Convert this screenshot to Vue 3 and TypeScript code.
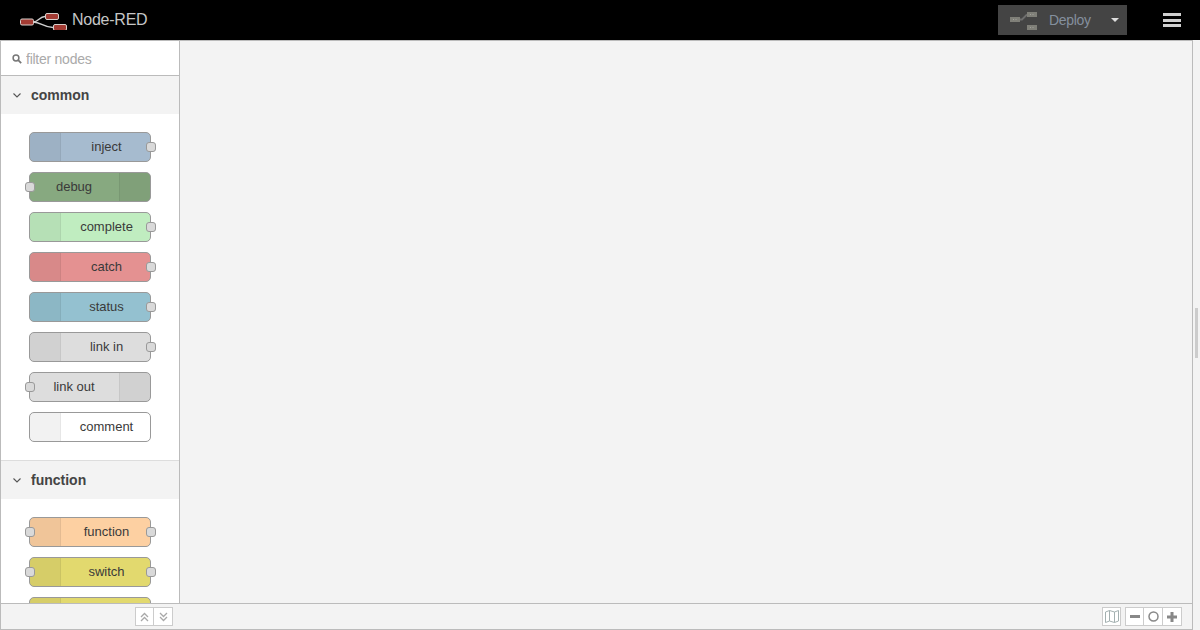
<script setup lang="ts">
interface PaletteNode {
  label: string
  color: string
  inPort: boolean
  outPort: boolean
  iconRight?: boolean
}
interface Category {
  name: string
  nodes: PaletteNode[]
}
const categories: Category[] = [
  {
    name: 'common',
    nodes: [
      { label: 'inject', color: '#a6bbcf', inPort: false, outPort: true },
      { label: 'debug', color: '#87a980', inPort: true, outPort: false, iconRight: true },
      { label: 'complete', color: '#c0edc0', inPort: false, outPort: true },
      { label: 'catch', color: '#e49191', inPort: false, outPort: true },
      { label: 'status', color: '#94c1d0', inPort: false, outPort: true },
      { label: 'link in', color: '#dddddd', inPort: false, outPort: true },
      { label: 'link out', color: '#dddddd', inPort: true, outPort: false, iconRight: true },
      { label: 'comment', color: '#ffffff', inPort: false, outPort: false },
    ],
  },
  {
    name: 'function',
    nodes: [
      { label: 'function', color: '#fdd0a2', inPort: true, outPort: true },
      { label: 'switch', color: '#e2d96e', inPort: true, outPort: true },
      { label: '', color: '#e2d96e', inPort: true, outPort: true },
    ],
  },
]
</script>

<template>
  <div class="app">
    <header class="topbar">
      <div class="brand">
        <svg class="logo" width="48" height="20" viewBox="0 0 48 20">
          <path d="M13 12 C19 12 19 6.5 25 6.5 M13 12 C21 12 24 17.5 33 17.5" fill="none" stroke="#cfcfcf" stroke-width="1.4" />
          <rect x="0.5" y="9" width="13" height="6" rx="1.5" fill="#a33b33" stroke="#d8d0cc" />
          <rect x="25.5" y="3.5" width="13" height="6" rx="1.5" fill="#a33b33" stroke="#d8d0cc" />
          <rect x="33.5" y="14.5" width="13" height="6" rx="1.5" fill="#a33b33" stroke="#d8d0cc" />
        </svg>
        <span class="brand-name">Node-RED</span>
      </div>
      <div class="top-actions">
        <div class="deploy">
          <svg class="deploy-icon" width="27" height="20" viewBox="0 0 27 20">
            <path d="M10 9.5 H12 L17 4.5" fill="none" stroke="#6e6e6e" stroke-width="1.8" />
            <rect x="0" y="7" width="10" height="5" fill="#7f7f78" />
            <rect x="17" y="2" width="10" height="5" fill="#7f7f78" />
            <rect x="17" y="15" width="10" height="5" fill="#7f7f78" />
            <path d="M3 9.5 H7.5 M20 4.5 H24.5 M20 17.5 H24.5" stroke="#a3a39c" stroke-width="1" stroke-dasharray="1 1.5" />
          </svg>
          <span class="deploy-label">Deploy</span>
          <span class="caret"></span>
        </div>
        <div class="burger"><i></i><i></i><i></i></div>
      </div>
    </header>

    <main class="body">
      <aside class="palette">
        <div class="filter">
          <svg class="search" width="10" height="10" viewBox="0 0 10 10">
            <circle cx="4" cy="4" r="2.9" fill="none" stroke="#777" stroke-width="1.5" />
            <path d="M6.2 6.2 L9.2 9.2" stroke="#777" stroke-width="1.8" />
          </svg>
          <input class="filter-input" type="text" placeholder="filter nodes" />
        </div>
        <div class="categories">
          <section v-for="cat in categories" :key="cat.name" class="category">
            <div class="cat-head">
              <svg class="chev" width="8" height="5" viewBox="0 0 8 5">
                <path d="M0.5 0.5 L4 4 L7.5 0.5" fill="none" stroke="#555" stroke-width="1.1" />
              </svg>
              <span>{{ cat.name }}</span>
            </div>
            <div class="cat-nodes">
              <div
                v-for="(n, i) in cat.nodes"
                :key="i"
                class="node"
                :class="{ 'icon-right': n.iconRight }"
                :style="{ backgroundColor: n.color }"
              >
                <span class="node-icon"></span>
                <span class="node-label">{{ n.label }}</span>
                <span v-if="n.inPort" class="port port-in"></span>
                <span v-if="n.outPort" class="port port-out"></span>
              </div>
            </div>
          </section>
        </div>
        <footer class="bar palette-bar">
          <div class="btn-group">
            <button class="tool-btn">
              <svg width="9" height="10" viewBox="0 0 9 10"><path d="M1 5 L4.5 1.5 L8 5 M1 9 L4.5 5.5 L8 9" fill="none" stroke="#a8a8a8" stroke-width="1.3" /></svg>
            </button>
            <button class="tool-btn wide">
              <svg width="9" height="10" viewBox="0 0 9 10"><path d="M1 1 L4.5 4.5 L8 1 M1 5 L4.5 8.5 L8 5" fill="none" stroke="#a8a8a8" stroke-width="1.3" /></svg>
            </button>
          </div>
        </footer>
      </aside>

      <section class="workspace">
        <div class="canvas"></div>
        <footer class="bar work-bar">
          <button class="tool-btn map">
            <svg width="14" height="13" viewBox="0 0 14 13">
              <path d="M0.5 2 L4.5 0.5 L9.5 2 L13.5 0.5 V11 L9.5 12.5 L4.5 11 L0.5 12.5 Z M4.5 0.5 V11 M9.5 2 V12.5" fill="none" stroke="#a3b0b0" stroke-width="1" />
            </svg>
          </button>
          <div class="btn-group zoom">
            <button class="tool-btn">
              <svg width="10" height="11" viewBox="0 0 10 11"><rect x="0" y="4" width="10" height="3" fill="#888" /></svg>
            </button>
            <button class="tool-btn wide">
              <svg width="11" height="11" viewBox="0 0 11 11"><circle cx="5.5" cy="5.5" r="4.5" fill="none" stroke="#888" stroke-width="1.5" /></svg>
            </button>
            <button class="tool-btn wide">
              <svg width="10" height="10" viewBox="0 0 10 10"><path d="M0 3.5 H3.5 V0 H6.5 V3.5 H10 V6.5 H6.5 V10 H3.5 V6.5 H0 Z" fill="#888" /></svg>
            </button>
          </div>
        </footer>
      </section>

      <div class="gutter"><span class="handle"></span></div>
    </main>
  </div>
</template>

<style>
html, body { margin: 0; padding: 0; }
</style>

<style scoped>
.app {
  width: 1200px;
  height: 630px;
  display: flex;
  flex-direction: column;
  overflow: hidden;
  font-family: "Liberation Sans", Arial, sans-serif;
  color: #333;
  background: #f3f3f3;
}
.topbar {
  height: 40px;
  flex: none;
  background: #000;
  display: flex;
  align-items: center;
  justify-content: space-between;
  box-sizing: border-box;
}
.brand { display: flex; align-items: center; margin-left: 20px; }
.logo { display: block; margin-right: 4px; }
.brand-name { font-size: 16px; color: #c6c6c6; letter-spacing: -0.25px; }
.top-actions { display: flex; align-items: center; }
.deploy {
  width: 129px;
  height: 30px;
  box-sizing: border-box;
  background: #444;
  display: flex;
  align-items: center;
  padding-left: 12px;
}
.deploy-icon { display: block; }
.deploy-label { font-size: 14px; color: #84909e; margin-left: 12px; letter-spacing: -0.3px; }
.caret {
  width: 0;
  height: 0;
  margin-left: 20px;
  border-left: 4.5px solid transparent;
  border-right: 4.5px solid transparent;
  border-top: 4.5px solid #ddd;
}
.burger {
  width: 18px;
  margin: 0 19px 0 36px;
  display: flex;
  flex-direction: column;
  gap: 2.5px;
}
.burger i { display: block; height: 3px; background: #d0d0d0; }
.body { flex: 1; min-height: 0; display: flex; }
.palette {
  width: 180px;
  flex: none;
  box-sizing: border-box;
  border-left: 1px solid #bbb;
  border-right: 1px solid #bbb;
  border-top: 1px solid #bbb;
  display: flex;
  flex-direction: column;
  background: #fff;
}
.filter {
  height: 35px;
  flex: none;
  box-sizing: border-box;
  border-bottom: 1px solid #bbb;
  display: flex;
  align-items: center;
  padding: 2px 0 0 11px;
}
.search { display: block; margin-right: 4px; }
.filter-input {
  border: none;
  outline: none;
  padding: 0;
  width: 140px;
  font: 14px "Liberation Sans", Arial, sans-serif;
  letter-spacing: -0.25px;
  color: #333;
  background: transparent;
}
.filter-input::placeholder { color: #aaa; opacity: 1; }
.categories { flex: 1; min-height: 0; overflow: hidden; }
.category + .category { border-top: 1px solid #ddd; }
.cat-head {
  height: 38px;
  background: #f3f3f3;
  display: flex;
  align-items: center;
  font-size: 14px;
  font-weight: bold;
  color: #444;
  padding-left: 12px;
}
.chev { display: block; margin-right: 10px; }
.cat-nodes {
  padding: 18px 0 18px 28px;
  display: flex;
  flex-direction: column;
  gap: 10px;
}
.node {
  position: relative;
  width: 122px;
  height: 30px;
  box-sizing: border-box;
  border: 1px solid #999;
  border-radius: 5px;
  display: flex;
  align-items: center;
  font-size: 13px;
  color: #3a3a3a;
}
.node.icon-right { flex-direction: row-reverse; }
.node-icon {
  width: 31px;
  height: 100%;
  flex: none;
  box-sizing: border-box;
  background: rgba(0, 0, 0, 0.05);
  border-right: 1px solid rgba(0, 0, 0, 0.05);
  border-radius: 4px 0 0 4px;
}
.node.icon-right .node-icon {
  border-right: none;
  border-left: 1px solid rgba(0, 0, 0, 0.05);
  border-radius: 0 4px 4px 0;
}
.node-label {
  flex: 1;
  text-align: center;
  white-space: nowrap;
  padding: 0 0 2px 2px;
}
.node.icon-right .node-label { padding: 0 1px 2px 0; }
.port {
  position: absolute;
  top: 9px;
  width: 10px;
  height: 10px;
  box-sizing: border-box;
  background: #d9d9d9;
  border: 1px solid #999;
  border-radius: 3px;
}
.port-in { left: -5px; }
.port-out { right: -6px; }
.bar {
  height: 27px;
  flex: none;
  box-sizing: border-box;
  background: #f3f3f3;
  border-top: 1px solid #bbb;
  border-bottom: 1px solid #bbb;
  display: flex;
  align-items: center;
  justify-content: flex-end;
}
.palette-bar { margin: 0 -1px 0 0; padding-right: 7px; }
.btn-group { display: flex; }
.tool-btn {
  width: 19px;
  height: 19px;
  padding: 0;
  box-sizing: border-box;
  background: #fff;
  border: 1px solid #ccc;
  display: flex;
  align-items: center;
  justify-content: center;
}
.tool-btn.wide { width: 20px; margin-left: -1px; }
.workspace {
  flex: 1;
  min-width: 0;
  display: flex;
  flex-direction: column;
  box-sizing: border-box;
  border-right: 1px solid #bbb;
  border-top: 1px solid #bbb;
}
.canvas { flex: 1; background: #f3f3f3; }
.work-bar { padding-right: 10px; }
.map { margin-right: 4px; }
.gutter {
  width: 7px;
  flex: none;
  position: relative;
  background: #f3f3f3;
}
.handle {
  position: absolute;
  left: 2px;
  top: 268px;
  width: 3px;
  height: 50px;
  background: #ccc;
}
</style>
